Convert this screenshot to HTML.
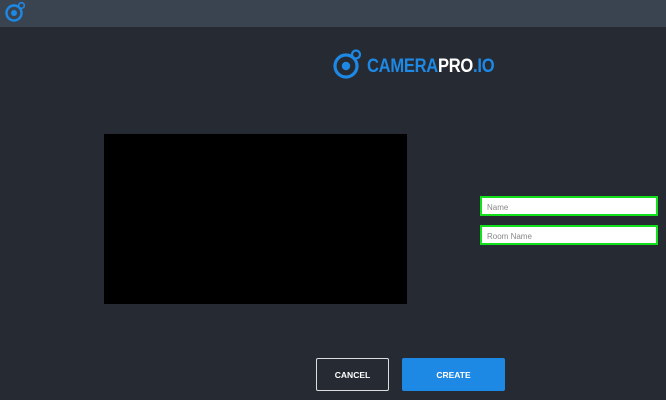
<!DOCTYPE html>
<html><head><style>
*{margin:0;padding:0;box-sizing:border-box}
body{width:666px;height:400px;background:#262b33;font-family:"Liberation Sans",sans-serif;position:relative;overflow:hidden}
.hdr{position:absolute;left:0;top:0;width:666px;height:27px;background:#3a4451}
.abs{position:absolute}
.inp{position:absolute;left:480px;width:178px;height:20px;background:#fff;border:2px solid #12e01a;font-size:8px;color:#888;padding:5px 0 0 5px}
.btn{position:absolute;top:358px;height:33px;font-size:8.5px;font-weight:bold;color:#fff;display:flex;align-items:center;justify-content:center;border-radius:2px}
</style></head><body>
<div class="hdr"></div>
<svg class="abs" style="left:3px;top:1px" width="24" height="24" viewBox="0 0 24 24">
<circle cx="11" cy="12" r="7.5" fill="none" stroke="#1e88e5" stroke-width="2.4"/>
<circle cx="11" cy="12" r="3" fill="#1e88e5"/>
<circle cx="18.5" cy="4.5" r="2.8" fill="#3a4451" stroke="#1e88e5" stroke-width="1.6"/>
</svg>
<svg class="abs" style="left:330px;top:46px" width="36" height="36" viewBox="0 0 36 36">
<circle cx="16" cy="20" r="11" fill="none" stroke="#1e88e5" stroke-width="3.2"/>
<circle cx="16" cy="20" r="4.2" fill="#1e88e5"/>
<circle cx="26" cy="8.5" r="4" fill="#262b33" stroke="#1e88e5" stroke-width="2.2"/>
</svg>
<div class="abs" style="left:367px;top:56px;font-size:19px;font-weight:bold;letter-spacing:-0.3px;color:#1e88e5;transform:scaleX(0.87);transform-origin:left">CAMERA<span style="color:#fff">PRO</span>.IO</div>
<div class="abs" style="left:104px;top:134px;width:303px;height:170px;background:#000"></div>
<div class="inp" style="top:196px">Name</div>
<div class="inp" style="top:225px">Room Name</div>
<div class="btn" style="left:316px;width:73px;border:1.5px solid #ddd">CANCEL</div>
<div class="btn" style="left:402px;width:103px;background:#1e88e5">CREATE</div>
</body></html>
